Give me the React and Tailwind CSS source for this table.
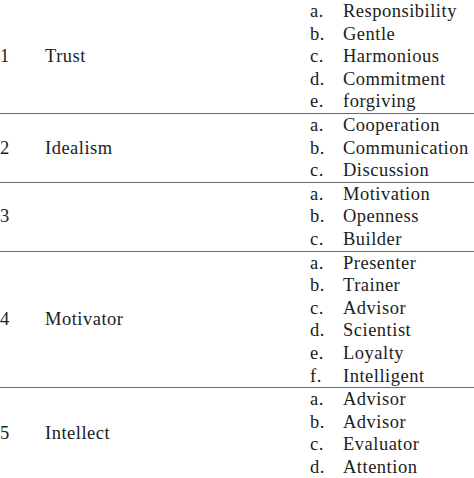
import React from "react";

const rows = [
  { no: "1", name: "Trust", items: ["Responsibility", "Gentle", "Harmonious", "Commitment", "forgiving"] },
  { no: "2", name: "Idealism", items: ["Cooperation", "Communication", "Discussion"] },
  { no: "3", name: "", items: ["Motivation", "Openness", "Builder"] },
  { no: "4", name: "Motivator", items: ["Presenter", "Trainer", "Advisor", "Scientist", "Loyalty", "Intelligent"] },
  { no: "5", name: "Intellect", items: ["Advisor", "Advisor", "Evaluator", "Attention"] },
];

const letters = ["a.", "b.", "c.", "d.", "e.", "f."];

export default function App() {
  return (
    <div
      className="w-[474px] h-[478px] overflow-hidden bg-white text-[#1c1c1c] text-[18.5px] tracking-[0.5px] leading-[22.6px]"
      style={{ fontFamily: '"Liberation Serif", "Times New Roman", serif' }}
    >
      {rows.map((row, i) => (
        <div
          key={row.no}
          className={`flex items-center ${i < rows.length - 1 ? "border-b-[1.5px] border-[#6a6a6a]" : ""}`}
        >
          <div className="w-[45px] shrink-0">{row.no}</div>
          <div className="w-[265px] shrink-0">{row.name}</div>
          <div className="flex flex-col whitespace-nowrap">
            {row.items.map((item, j) => (
              <div key={j} className="flex">
                <span className="w-[33px] shrink-0">{letters[j]}</span>
                <span>{item}</span>
              </div>
            ))}
          </div>
        </div>
      ))}
    </div>
  );
}
